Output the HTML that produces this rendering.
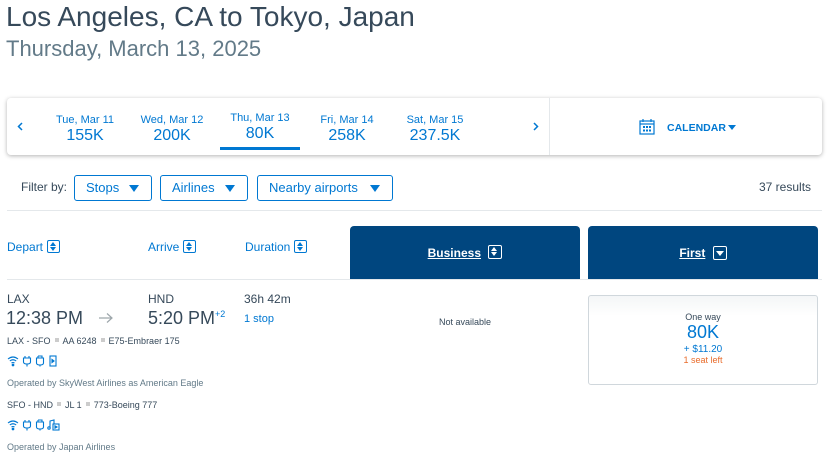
<!DOCTYPE html>
<html><head><style>
body{margin:0;width:828px;height:462px;overflow:hidden;background:#fff;font-family:"Liberation Sans",sans-serif;position:relative;color:#36495a}
.a{position:absolute;white-space:nowrap}
.b{color:#0078d2}
.d{position:absolute;text-align:center;width:100px;color:#0078d2}
.d .l{font-size:11px}.d .v{font-size:16px;margin-top:1px}
.btn{position:absolute;top:175px;height:26px;border:1px solid #0078d2;border-radius:3px;color:#0078d2;font-size:13px;line-height:24px;box-sizing:border-box;padding-left:11px}
.btn i{position:absolute;right:12px;top:9px;border-left:5px solid transparent;border-right:5px solid transparent;border-top:7px solid #0078d2}
.sb{display:inline-block;width:13px;height:13px;border:1px solid #0078d2;border-radius:2px;vertical-align:-2px;margin-left:4px;position:relative;box-sizing:border-box}
.sb:before{content:"";position:absolute;left:2px;top:1px;border-left:3.5px solid transparent;border-right:3.5px solid transparent;border-bottom:4px solid #0078d2}
.sb:after{content:"";position:absolute;left:2px;top:6px;border-left:3.5px solid transparent;border-right:3.5px solid transparent;border-top:4px solid #0078d2}
.hd{position:absolute;top:226px;height:53px;background:#00467f;border-radius:4px 4px 0 0;color:#fff;font-size:12px;font-weight:bold;text-align:center;line-height:54px}
.hd .sb{border-color:#fff;width:14px;height:14px}
.hd .sb:before{border-bottom-color:#fff}.hd .sb:after{border-top-color:#fff}
.g{color:#627a88;font-size:9px}
.sq{display:inline-block;width:4px;height:4px;background:#ccc;margin:0 4px;vertical-align:2px}
</style></head><body>
<div class="a" style="left:6px;top:0;font-size:28px;line-height:34px">Los Angeles, CA to Tokyo, Japan</div>
<div class="a" style="left:6px;top:36px;font-size:22px;color:#627a88">Thursday, March 13, 2025</div>

<div class="a" style="left:7px;top:98px;width:815px;height:57px;border-radius:4px;box-shadow:0 1px 4px rgba(0,0,0,.3);background:#fff"></div>
<div class="a" style="left:549px;top:98px;width:1px;height:57px;background:#e4e8eb"></div>
<svg class="a" style="left:17px;top:122px" width="6" height="9"><path d="M5 1 L1.5 4.5 L5 8" fill="none" stroke="#0078d2" stroke-width="1.5"/></svg>
<svg class="a" style="left:533px;top:122px" width="6" height="9"><path d="M1 1 L4.5 4.5 L1 8" fill="none" stroke="#0078d2" stroke-width="1.5"/></svg>
<div class="d" style="left:35px;top:114px"><div class="l">Tue, Mar 11</div><div class="v">155K</div></div>
<div class="d" style="left:122px;top:114px"><div class="l">Wed, Mar 12</div><div class="v">200K</div></div>
<div class="d" style="left:210px;top:112px"><div class="l">Thu, Mar 13</div><div class="v">80K</div></div>
<div class="d" style="left:297px;top:114px"><div class="l">Fri, Mar 14</div><div class="v">258K</div></div>
<div class="d" style="left:385px;top:114px"><div class="l">Sat, Mar 15</div><div class="v">237.5K</div></div>
<div class="a" style="left:220px;top:147px;width:80px;height:3px;background:#0078d2"></div>
<svg class="a" style="left:639px;top:118px" width="16" height="17" viewBox="0 0 16 17" fill="none" stroke="#0078d2" stroke-width="1.2"><rect x="1" y="3" width="14" height="13"/><line x1="1" y1="6" x2="15" y2="6"/><line x1="4" y1="1" x2="4" y2="4"/><line x1="12" y1="1" x2="12" y2="4"/><g fill="#0078d2" stroke="none"><rect x="4" y="8" width="2" height="2"/><rect x="7" y="8" width="2" height="2"/><rect x="10" y="8" width="2" height="2"/><rect x="4" y="11.5" width="2" height="2"/><rect x="7" y="11.5" width="2" height="2"/><rect x="10" y="11.5" width="2" height="2"/></g></svg>
<div class="a b" style="left:667px;top:122px;font-size:10.5px;font-weight:bold">CALENDAR</div>
<div class="a" style="left:728px;top:125px;border-left:4px solid transparent;border-right:4px solid transparent;border-top:5px solid #0078d2"></div>

<div class="a" style="left:21px;top:180px;font-size:12px;color:#36495a">Filter by:</div>
<div class="btn" style="left:74px;width:78px">Stops<i></i></div>
<div class="btn" style="left:160px;width:88px">Airlines<i></i></div>
<div class="btn" style="left:257px;width:136px">Nearby airports<i></i></div>
<div class="a" style="left:759px;top:180px;font-size:12px">37 results</div>
<div class="a" style="left:7px;top:210px;width:815px;height:1px;background:#e4e8eb"></div>

<div class="a b" style="left:7px;top:240px;font-size:12px">Depart<span class="sb"></span></div>
<div class="a b" style="left:148px;top:240px;font-size:12px">Arrive<span class="sb"></span></div>
<div class="a b" style="left:245px;top:240px;font-size:12px">Duration<span class="sb"></span></div>
<div class="hd" style="left:350px;width:230px"><u>Business</u> <span class="sb"></span></div>
<div class="hd" style="left:588px;width:230px"><u>First</u> <span style="display:inline-block;width:14px;height:14px;border:1px solid #fff;border-radius:2px;vertical-align:-3px;margin-left:4px;position:relative;box-sizing:border-box"><span style="position:absolute;left:2px;top:4px;border-left:4px solid transparent;border-right:4px solid transparent;border-top:5px solid #fff"></span></span></div>
<div class="a" style="left:7px;top:279px;width:815px;height:1px;background:#e4e8eb"></div>

<div class="a" style="left:7px;top:292px;font-size:12px">LAX</div>
<div class="a" style="left:6px;top:308px;font-size:18px">12:38 PM</div>
<svg class="a" style="left:98px;top:312px" width="16" height="12"><path d="M1 6 H14 M9 1.5 L14 6 L9 10.5" fill="none" stroke="#9da6ab" stroke-width="1.2"/></svg>
<div class="a" style="left:148px;top:292px;font-size:12px">HND</div>
<div class="a" style="left:148px;top:308px;font-size:18px">5:20 PM<sup class="b" style="font-size:9px">+2</sup></div>
<div class="a" style="left:244px;top:292px;font-size:12px">36h 42m</div>
<div class="a b" style="left:244px;top:313px;font-size:11px">1 stop</div>
<div class="a" style="left:7px;top:336px;font-size:9px">LAX - SFO<span class="sq"></span>AA 6248<span class="sq"></span>E75-Embraer 175</div>
<svg class="a" style="left:7px;top:355px" width="60" height="12" fill="none" stroke="#0078d2" stroke-width="1.1">
<path d="M1 4 Q6 0 11 4 M2.8 6 Q6 3.5 9.2 6 M4.5 8 Q6 7 7.5 8"/><circle cx="6" cy="10" r="0.8" fill="#0078d2"/>
<path d="M18 1 V3 M22 1 V3 M16.5 3 H23.5 V7 Q23.5 9 20 9 Q16.5 9 16.5 7 Z M20 9 V11.5"/>
<path d="M31 1 H35 V3 M31 1 V3 M29.5 3 H36.5 V8 Q36.5 10 33 10 Q29.5 10 29.5 8 Z M33 10 V11.5"/>
<rect x="43" y="1" width="6" height="10"/><path d="M45 4.5 L47 6 L45 7.5Z" fill="#0078d2"/></svg>
<div class="a g" style="left:7px;top:378px">Operated by SkyWest Airlines as American Eagle</div>
<div class="a" style="left:7px;top:400px;font-size:9px">SFO - HND<span class="sq"></span>JL 1<span class="sq"></span>773-Boeing 777</div>
<svg class="a" style="left:7px;top:419px" width="60" height="12" fill="none" stroke="#0078d2" stroke-width="1.1">
<path d="M1 4 Q6 0 11 4 M2.8 6 Q6 3.5 9.2 6 M4.5 8 Q6 7 7.5 8"/><circle cx="6" cy="10" r="0.8" fill="#0078d2"/>
<path d="M18 1 V3 M22 1 V3 M16.5 3 H23.5 V7 Q23.5 9 20 9 Q16.5 9 16.5 7 Z M20 9 V11.5"/>
<path d="M31 1 H35 V3 M31 1 V3 M29.5 3 H36.5 V8 Q36.5 10 33 10 Q29.5 10 29.5 8 Z M33 10 V11.5"/>
<path d="M43 9 V2 L47 1 V5"/><circle cx="42" cy="9" r="1.2"/><rect x="46" y="5" width="6" height="6"/><path d="M48 6.8 L50 8 L48 9.2Z" fill="#0078d2"/></svg>
<div class="a g" style="left:7px;top:442px">Operated by Japan Airlines</div>

<div class="a" style="left:439px;top:317px;font-size:9px">Not available</div>
<div class="a" style="left:588px;top:295px;width:230px;height:90px;border:1px solid #d0d7dc;border-radius:3px;box-sizing:border-box;background:linear-gradient(#f4f6f7,#fff 20px);text-align:center">
<div style="font-size:9px;margin-top:16px">One way</div>
<div style="font-size:18px;color:#0078d2;line-height:20px">80K</div>
<div style="font-size:10px;color:#0078d2;margin-top:2px">+ $11.20</div>
<div style="font-size:9px;color:#e86b2a">1 seat left</div></div>
</body></html>
